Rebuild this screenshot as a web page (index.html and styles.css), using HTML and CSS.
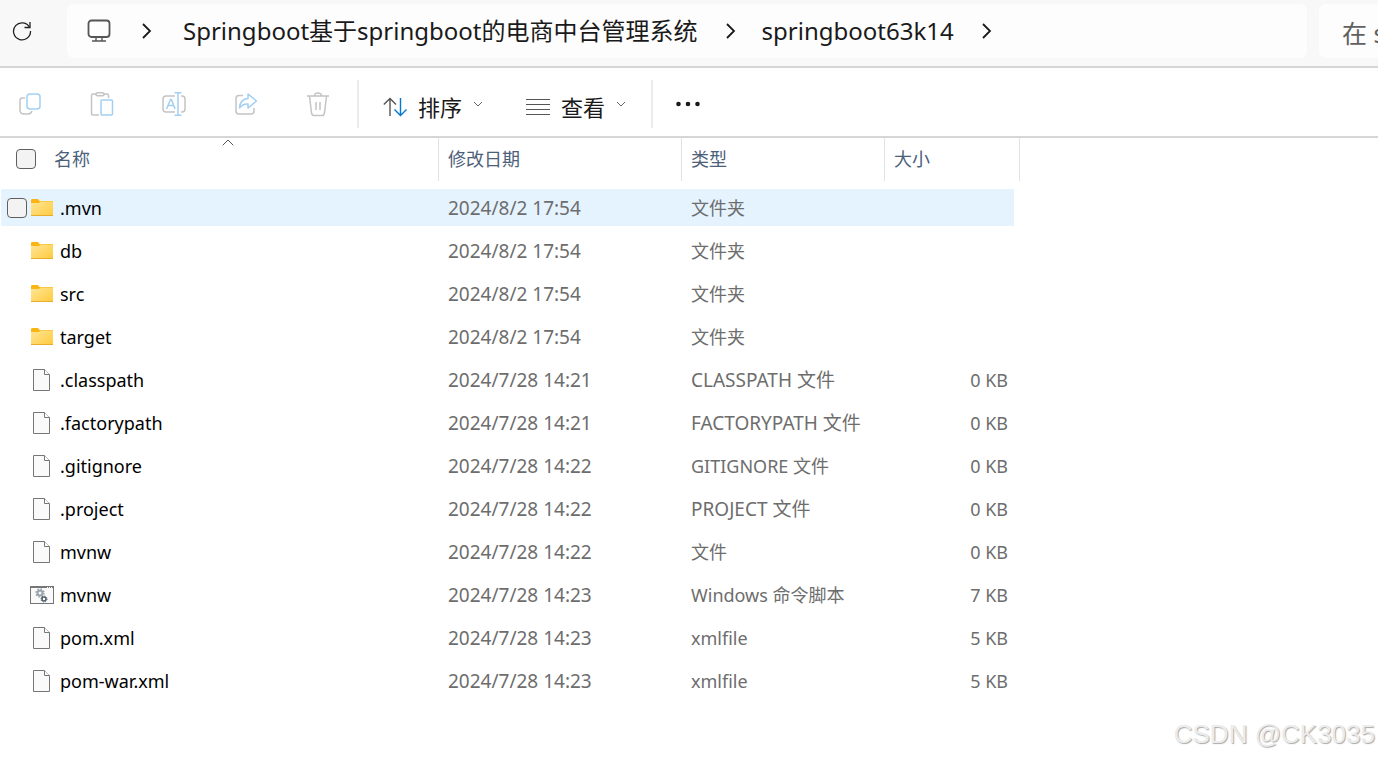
FILE: index.html
```html
<!DOCTYPE html>
<html lang="zh-CN">
<head>
<meta charset="utf-8">
<title>springboot63k14</title>
<link rel="stylesheet" href="styles.css">
</head>
<body>
<svg class="sprite" aria-hidden="true">
  <defs>
    <linearGradient id="folder-fill" x1="0" y1="0" x2="1" y2="1">
      <stop offset="0" stop-color="#ffe597"/><stop offset="1" stop-color="#ffcb3d"/>
    </linearGradient>
    <symbol id="folder" viewBox="0 0 24 24">
      <path d="M1 4.5Q1 3 2 3H8L9.5 5H23V10H1Z" fill="#f9b613"/>
      <path d="M1 7H9L10.500 5.500H23V20H1Z" fill="url(#folder-fill)"/>
      <path d="M1 19.500H23" stroke="#e8ad2d"/>
    </symbol>
    <symbol id="file" viewBox="0 0 24 24">
      <path d="M3.500 1.500H14.500L19.500 6.500V22.500H3.500Z" fill="#fafafa" stroke="#767676"/>
      <path d="M14.500 1.500V6.500H19.500" fill="#fff" stroke="#767676"/>
    </symbol>
    <symbol id="script" viewBox="0 0 24 24">
      <rect x=".5" y="3.500" width="23" height="17" fill="#fafafa" stroke="#767676"/>
      <path d="M1 4.500H23" stroke="#767676"/>
      <path d="M17 4.500H22" stroke="#fff" stroke-dasharray="1 1"/>
      <circle cx="10" cy="10" r="2.500" fill="none" stroke="#9aa3ad" stroke-width="2"/>
      <circle cx="10" cy="10" r="4" fill="none" stroke="#9aa3ad" stroke-width="1.500" stroke-dasharray="1.570 1.570"/>
      <circle cx="14" cy="16" r="2" fill="#fff" stroke="#56616c" stroke-width="1.600"/>
      <circle cx="14" cy="16" r="3" fill="none" stroke="#56616c" stroke-dasharray="1.180 1.180"/>
    </symbol>
    <symbol id="chevron" viewBox="0 0 10 16"><path d="M1 1L8 8L1 15" fill="none" stroke="#1a1a1a" stroke-width="1.800"/></symbol>
    <symbol id="caret" viewBox="0 0 10 6"><path d="M1 1L5 5L9 1" fill="none" stroke="#666"/></symbol>
  </defs>
</svg>

<header class="address-bar">
  <button class="refresh" type="button" aria-label="刷新">
    <svg width="20" height="20" viewBox="0 0 20 20" fill="none" stroke="#222" stroke-width="1.300"><path d="M17.600 6.500A8.500 8.500 0 1 0 18.500 10"/><path d="M18 1V6.500H12.500"/></svg>
  </button>
  <nav class="path" aria-label="路径">
    <svg class="monitor" width="24" height="24" viewBox="0 0 24 24" fill="none" stroke="#555" stroke-width="1.800"><rect x="1.500" y="1.500" width="21" height="16.500" rx="3"/><path d="M9 18V22M15 18V22M5 22H19" stroke-width="1.400"/></svg>
    <svg class="chevron"><use href="#chevron"/></svg>
    <a class="crumb" href="#">Springboot基于springboot的电商中台管理系统</a>
    <svg class="chevron"><use href="#chevron"/></svg>
    <a class="crumb" href="#">springboot63k14</a>
    <svg class="chevron"><use href="#chevron"/></svg>
  </nav>
  <input class="search" type="text" aria-label="搜索" placeholder="在 springboot63k14">
</header>

<div class="toolbar" role="toolbar">
  <button class="tool" type="button" aria-label="复制"><svg width="24" height="24" viewBox="0 0 24 24" fill="none" stroke="#c4c4c4" stroke-width="1.500"><path d="M7 6H4Q2 6 2 9V18Q2 22 6 22H10Q13 22 14 19"/><rect x="9" y="2" width="13" height="15" rx="3" stroke="#a3cff1"/></svg></button>
  <button class="tool" type="button" aria-label="粘贴"><svg width="24" height="24" viewBox="0 0 24 24" fill="none" stroke="#c4c4c4" stroke-width="1.500"><path d="M9 23H3Q1.500 23 1.500 21.500V3.500Q1.500 2 3 2H6M14 2H17Q18.500 2 18.500 3.500V6"/><rect x="6" y=".8" width="8" height="3" rx="1.500"/><rect x="11" y="8" width="11.500" height="15" rx="1" stroke="#a3cff1"/></svg></button>
  <button class="tool" type="button" aria-label="重命名"><svg width="26" height="26" viewBox="0 0 26 26" fill="none" stroke="#c4c4c4" stroke-width="1.500"><path d="M14 5H5Q2 5 2 8V18Q2 21 5 21H14M20 5H21Q24 5 24 8V18Q24 21 21 21H20"/><path d="M5.500 18L9.500 8.500H10.500L14 18M7 14.500H13M17 2V24M13.500 1.700H20.500M13.500 24.300H20.500" stroke="#a3cff1"/></svg></button>
  <button class="tool" type="button" aria-label="共享"><svg width="24" height="24" viewBox="0 0 24 24" fill="none" stroke="#c4c4c4" stroke-width="1.500"><path d="M9 3.500H5Q2 3.500 2 6.500V19Q2 22 5 22H17Q20 22 20 19V16"/><path d="M14 2L22.500 9L14 16V12Q9 11.500 5.500 16Q6 7 14 6.500Z" stroke="#a3cff1" stroke-linejoin="round"/></svg></button>
  <button class="tool" type="button" aria-label="删除"><svg width="24" height="26" viewBox="0 0 24 26" fill="none" stroke="#c4c4c4" stroke-width="1.500"><path d="M1 5H23M8.500 5Q8.500 2 12 2T15.500 5M3.500 5L5.500 22Q6 24.500 8 24.500H16Q18 24.500 18.500 22L20.500 5M10 11V19M14 11V19"/></svg></button>
  <span class="divider"></span>
  <button class="menu" type="button"><svg width="24" height="20" viewBox="0 0 24 20" fill="none" stroke-width="1.400"><path d="M7 19V1.500M.8 7.500L7 1.500L13 7.500" stroke="#555"/><path d="M17.500 1V18.500M11.500 12.500L17.500 18.500L23.500 12.500" stroke="#0078d4"/></svg><span>排序</span><svg class="caret"><use href="#caret"/></svg></button>
  <button class="menu" type="button"><svg width="24" height="18" viewBox="0 0 24 18" stroke="#555" stroke-width="1.200"><path d="M0 1.500H24M0 6.500H24M0 11.500H24M0 16.500H24"/></svg><span>查看</span><svg class="caret"><use href="#caret"/></svg></button>
  <span class="divider"></span>
  <button class="more" type="button" aria-label="更多"><svg width="24" height="6" viewBox="0 0 24 6" fill="#1a1a1a"><circle cx="2.500" cy="3" r="2.300"/><circle cx="12" cy="3" r="2.300"/><circle cx="21.500" cy="3" r="2.300"/></svg></button>
</div>

<main>
  <table class="files">
    <colgroup><col class="col-name"><col class="col-date"><col class="col-type"><col class="col-size"></colgroup>
    <thead>
      <tr>
        <th><div class="head head-name"><input class="check" type="checkbox" aria-label="全选"><span>名称</span><svg class="sorted" width="12" height="7" viewBox="0 0 12 7" fill="none" stroke="#555"><path d="M.7 6.300L6 1L11.300 6.300"/></svg></div></th>
        <th><div class="head">修改日期</div></th>
        <th><div class="head">类型</div></th>
        <th><div class="head">大小</div></th>
      </tr>
    </thead>
    <tbody>
      <tr class="hover"><td><div class="name"><input class="check" type="checkbox" aria-label=".mvn"><svg class="icon"><use href="#folder"/></svg><span>.mvn</span></div></td><td class="wide">2024/8/2 17:54</td><td>文件夹</td><td></td></tr>
      <tr><td><div class="name"><svg class="icon"><use href="#folder"/></svg><span>db</span></div></td><td class="wide">2024/8/2 17:54</td><td>文件夹</td><td></td></tr>
      <tr><td><div class="name"><svg class="icon"><use href="#folder"/></svg><span>src</span></div></td><td class="wide">2024/8/2 17:54</td><td>文件夹</td><td></td></tr>
      <tr><td><div class="name"><svg class="icon"><use href="#folder"/></svg><span>target</span></div></td><td class="wide">2024/8/2 17:54</td><td>文件夹</td><td></td></tr>
      <tr><td><div class="name"><svg class="icon"><use href="#file"/></svg><span>.classpath</span></div></td><td class="wide">2024/7/28 14:21</td><td class="wide">CLASSPATH 文件</td><td>0 KB</td></tr>
      <tr><td><div class="name"><svg class="icon"><use href="#file"/></svg><span>.factorypath</span></div></td><td class="wide">2024/7/28 14:21</td><td class="wide">FACTORYPATH 文件</td><td>0 KB</td></tr>
      <tr><td><div class="name"><svg class="icon"><use href="#file"/></svg><span>.gitignore</span></div></td><td class="wide">2024/7/28 14:22</td><td>GITIGNORE 文件</td><td>0 KB</td></tr>
      <tr><td><div class="name"><svg class="icon"><use href="#file"/></svg><span>.project</span></div></td><td class="wide">2024/7/28 14:22</td><td class="wide">PROJECT 文件</td><td>0 KB</td></tr>
      <tr><td><div class="name"><svg class="icon"><use href="#file"/></svg><span>mvnw</span></div></td><td class="wide">2024/7/28 14:22</td><td>文件</td><td>0 KB</td></tr>
      <tr><td><div class="name"><svg class="icon"><use href="#script"/></svg><span>mvnw</span></div></td><td class="wide">2024/7/28 14:23</td><td>Windows 命令脚本</td><td>7 KB</td></tr>
      <tr><td><div class="name"><svg class="icon"><use href="#file"/></svg><span>pom.xml</span></div></td><td class="wide">2024/7/28 14:23</td><td>xmlfile</td><td>5 KB</td></tr>
      <tr><td><div class="name"><svg class="icon"><use href="#file"/></svg><span>pom-war.xml</span></div></td><td class="wide">2024/7/28 14:23</td><td>xmlfile</td><td>5 KB</td></tr>
    </tbody>
  </table>
</main>
<div class="watermark">CSDN @CK3035</div>
</body>
</html>
```
FILE: styles.css
```css
* { box-sizing: border-box; }

body {
  margin: 0;
  min-height: 100vh;
  position: relative;
  background: #fff;
  color: #1a1a1a;
  font-family: "Noto Sans", "Noto Sans CJK SC", sans-serif;
  font-size: 18px;
  line-height: 24px;
}

svg { display: block; flex: none; }
.sprite { position: absolute; width: 0; height: 0; }
button { border: 0; padding: 0; background: none; color: inherit; font: inherit; }

.address-bar {
  display: flex;
  align-items: center;
  height: 68px;
  padding: 0 0 4px;
  background: #f8f8f8;
  border-bottom: 2px solid #d6d6d6;
}
.refresh { flex: none; margin: 0 35px 0 12px; }
.path {
  flex: 1;
  min-width: 0;
  display: flex;
  align-items: center;
  height: 54px;
  padding: 0 20px;
  border-radius: 7px;
  background: #fdfdfd;
  font-size: 24px;
  line-height: 36px;
  white-space: nowrap;
}
.monitor { margin-right: 5px; }
.chevron { width: 10px; height: 16px; margin: 0 26px; }
.monitor + .chevron { margin-right: 31px; }
.crumb { color: inherit; text-decoration: none; }
.monitor ~ .crumb + .chevron { margin-left: 28px; }
.search {
  flex: none;
  width: 59px;
  height: 54px;
  margin-left: 12px;
  padding: 4px 0 0 23px;
  border: 0;
  border-radius: 7px 0 0 7px;
  background: #fdfdfd;
  font: inherit;
  font-size: 25px;
}
.search::placeholder { color: #606060; opacity: 1; }

.toolbar {
  display: flex;
  align-items: center;
  height: 70px;
  padding: 4px 0 0 10px;
  border-bottom: 2px solid #d6d6d6;
}
.tool {
  display: grid;
  place-items: center;
  width: 40px;
  height: 40px;
  margin-right: 32px;
}
.divider { width: 2px; height: 48px; margin-left: -13px; background: #ebebeb; }
.menu {
  display: flex;
  align-items: center;
  gap: 11px;
  margin-left: 24px;
  padding-top: 5px;
  font-size: 22px;
  line-height: 32px;
}
.menu + .menu { margin-left: 43px; }
.menu + .divider { margin-left: 25px; }
.caret { width: 10px; height: 6px; margin-top: -6px; }
.more { margin-left: 23px; }

.files { table-layout: fixed; width: 1020px; border-spacing: 0; }
.col-name { width: 439px; }
.col-date { width: 243px; }
.col-type { width: 203px; }
.col-size { width: 135px; }

th { height: 48px; padding: 0; vertical-align: top; text-align: left; font-weight: 400; color: #4c607a; }
.head {
  display: flex;
  align-items: center;
  height: 43px;
  padding: 0 0 2px 9px;
  border-right: 1px solid #e2e2e2;
}
.head-name { position: relative; gap: 18px; padding-left: 16px; }
.sorted { position: absolute; top: 1px; left: 222px; }

.check {
  appearance: none;
  width: 20px;
  height: 20px;
  margin: 0;
  border: 1px solid #5f5f5f;
  border-radius: 4px;
  background: #f3f3f3;
}

td {
  height: 43px;
  padding: 0 0 0 9px;
  border: 0 solid transparent;
  border-width: 3px 0;
  background-clip: padding-box;
  color: #6d6d6d;
  white-space: nowrap;
}
td:first-child { padding-left: 6px; border-left-width: 1px; color: #000; }
td:last-child { padding-right: 6px; border-right-width: 6px; text-align: right; }
.hover td { background-color: #e5f3ff; }
.hover td:first-child { border-radius: 4px 0 0 4px; }
.name {
  display: grid;
  grid-template-columns: 20px 24px 1fr;
  align-items: center;
  column-gap: 3px;
}
.name span { grid-column: 3; padding-left: 3px; }
.icon { grid-column: 2; width: 24px; height: 24px; }
.wide { font-size: 19px; }

.watermark {
  position: absolute;
  right: 3px;
  bottom: 7px;
  color: #ececec;
  font: 26px/32px "Liberation Sans", sans-serif;
  text-shadow: 1px 1px 1px #aaa;
}
```
